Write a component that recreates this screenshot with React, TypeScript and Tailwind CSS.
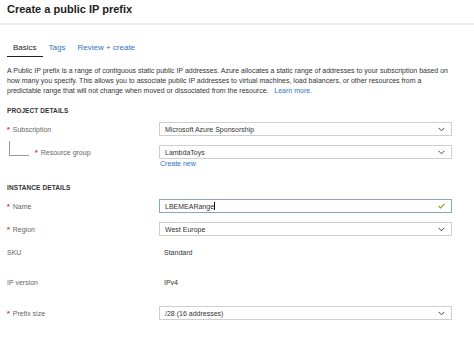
import React from "react";

// Formulário "Create a public IP prefix" — réplica estática

const FONT = "font-['Liberation_Sans',Arial,sans-serif]";

function Chevron() {
  return (
    <svg width="7" height="5" viewBox="0 0 7 5" className="shrink-0">
      <path d="M0.6 0.8 L3.5 3.8 L6.4 0.8" fill="none" stroke="#333" strokeWidth="0.9" />
    </svg>
  );
}

function Check() {
  return (
    <svg width="7" height="6" viewBox="0 0 7 6" className="shrink-0">
      <path d="M0.6 3.2 L2.6 5 L6.4 0.8" fill="none" stroke="#6aa82a" strokeWidth="1.1" />
    </svg>
  );
}

function Star() {
  return <span className="text-[#e0282e] text-[7px] font-bold mr-[3px] leading-none">*</span>;
}

function SelectBox({ value }: { value: string }) {
  return (
    <div className="w-[293px] h-[14px] border border-[#cfcfcf] bg-white flex items-center justify-between pl-[5px] pr-[6px]">
      <span className="text-[7px] text-[#333] leading-none">{value}</span>
      <Chevron />
    </div>
  );
}

function Row({ label, required, children, className = "" }: {
  label: string; required?: boolean; children: React.ReactNode; className?: string;
}) {
  return (
    <div className={`flex items-center h-[14px] px-[7px] ${className}`}>
      <div className="w-[152px] flex items-center text-[7px] text-[#666] leading-none">
        {required && <Star />}
        {label}
      </div>
      {children}
    </div>
  );
}

function SectionTitle({ children, className = "" }: { children: React.ReactNode; className?: string }) {
  return (
    <div className={`px-[7px] text-[6.5px] leading-[10px] font-semibold tracking-[0.1px] text-[#333] ${className}`}>
      {children}
    </div>
  );
}

export default function App() {
  return (
    <div className={`w-[474px] h-[341px] bg-white overflow-hidden ${FONT}`}>
      {/* Título */}
      <div className="h-[23px] px-[7px] pb-[4px] flex items-center text-[11px] font-semibold text-[#222]">
        Create a public IP prefix
      </div>
      <div className="h-[2px] bg-[#ececec]" />

      {/* Abas */}
      <div className="h-[32px] px-[7px] flex items-end text-[8px] leading-none">
        <div className="px-[6px] pb-[4px] border-b-[1.5px] border-[#222] text-[#222]">Basics</div>
        <div className="px-[6px] pb-[5.5px] text-[#2f73c4]">Tags</div>
        <div className="px-[6px] pb-[5.5px] text-[#2f73c4]">Review + create</div>
      </div>

      {/* Descrição */}
      <p className="mt-[9px] px-[7px] pr-[18px] text-[7px] leading-[10px] text-[#333]">
        A Public IP prefix is a range of contiguous static public IP addresses. Azure allocates a static range of addresses to your subscription based
        on how many you specify. This allows you to associate public IP addresses to virtual machines, load balancers, or other resources from a
        predictable range that will not change when moved or dissociated from the resource.{"\u00a0\u00a0 "}
        <span className="text-[#2f73c4]">Learn more.</span>
      </p>

      <SectionTitle className="mt-[10px]">PROJECT DETAILS</SectionTitle>

      <Row label="Subscription" required className="mt-[6px]">
        <SelectBox value="Microsoft Azure Sponsorship" />
      </Row>

      <div className="flex items-center h-[14px] px-[7px] mt-[9px]">
        <div className="w-[152px] flex items-center text-[7px] text-[#666] leading-none">
          <div className="self-start -mt-[8px] ml-[2px] mr-[6px] h-[15px] w-[20px] border-l border-b border-[#9a9a9a]" />
          <Star />
          Resource group
        </div>
        <SelectBox value="LambdaToys" />
      </div>
      <div className="pl-[160px] text-[7px] leading-[10px] text-[#2f73c4]">Create new</div>

      <SectionTitle className="mt-[14px]">INSTANCE DETAILS</SectionTitle>

      <Row label="Name" required className="mt-[6px]">
        <div className="w-[293px] h-[14px] border border-[#8aa4c6] bg-white flex items-center justify-between pl-[5px] pr-[6px]">
          <span className="text-[7px] text-[#333] leading-none flex items-center">
            LBEMEARange<span className="inline-block w-px h-[8px] bg-[#111]" />
          </span>
          <Check />
        </div>
      </Row>

      <Row label="Region" required className="mt-[9px]">
        <SelectBox value="West Europe" />
      </Row>

      <Row label="SKU" className="mt-[9px]">
        <span className="pl-[5px] text-[7px] text-[#333] leading-none">Standard</span>
      </Row>

      <Row label="IP version" className="mt-[16px]">
        <span className="pl-[5px] text-[7px] text-[#333] leading-none">IPv4</span>
      </Row>

      <Row label="Prefix size" required className="mt-[17px]">
        <SelectBox value="/28 (16 addresses)" />
      </Row>
    </div>
  );
}
